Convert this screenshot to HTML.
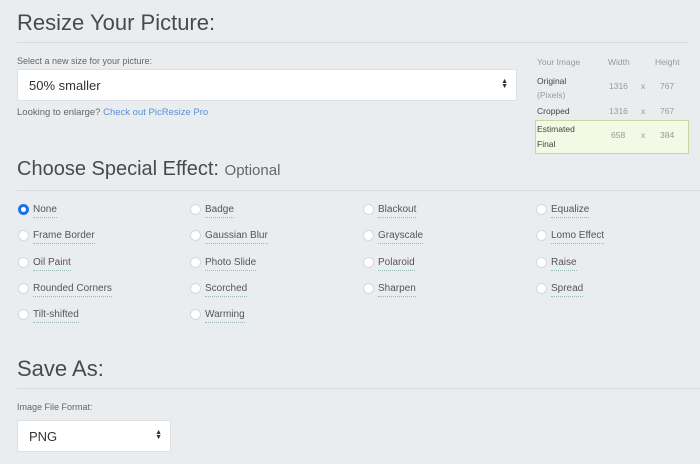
<!DOCTYPE html>
<html><head><style>
body{margin:0;width:700px;height:464px;background:#e9edf0;font-family:"Liberation Sans",sans-serif;position:relative;overflow:hidden;color:#555}
.a{position:absolute;white-space:nowrap}
h1{position:absolute;margin:0;font-weight:400;font-size:22px;color:#4a4a4a;white-space:nowrap}
.hr{position:absolute;left:17px;right:0;height:1px;background:#d6dadd}
.sel{position:absolute;background:#fff;border:1px solid #dde1e4;border-radius:2px;font-size:13px;color:#333}
.sel span{position:absolute;left:11px;top:8px}
.sel i{position:absolute;right:8px;top:9px;font-style:normal;font-size:7px;line-height:5px;color:#333}
.r{position:absolute;width:9px;height:9px;border-radius:50%;background:#fff;border:1px solid #d6d9dc}
.l{position:absolute;font-size:10px;color:#555;border-bottom:1px dotted #9bb;padding-bottom:2px}
.t{font-size:8.5px;color:#666}
</style></head><body>
<h1 style="left:17px;top:10px">Resize Your Picture:</h1>
<div class="hr" style="top:42px;right:12px"></div>
<div class="a" style="left:17px;top:56px;font-size:9px;color:#666">Select a new size for your picture:</div>
<div class="sel" style="left:17px;top:69px;width:498px;height:30px"><span>50% smaller</span><i>▲<br>▼</i></div>
<div class="a" style="left:17px;top:107px;font-size:9.5px;color:#666">Looking to enlarge? <span style="color:#5b8fd4">Check out PicResize Pro</span></div>
<div class="a t" style="left:537px;top:57px;color:#999">Your Image</div>
<div class="a t" style="left:608px;top:57px;color:#999">Width</div>
<div class="a t" style="left:655px;top:57px;color:#999">Height</div>
<div class="a t" style="left:537px;top:74px;color:#444;line-height:14px">Original<br><span style="color:#999">(Pixels)</span></div>
<div class="a t" style="left:609px;top:81px;color:#999">1316</div><div class="a t" style="left:641px;top:81px;color:#999">x</div><div class="a t" style="left:660px;top:81px;color:#999">767</div>
<div class="a t" style="left:537px;top:106px;color:#444">Cropped</div>
<div class="a t" style="left:609px;top:106px;color:#999">1316</div><div class="a t" style="left:641px;top:106px;color:#999">x</div><div class="a t" style="left:660px;top:106px;color:#999">767</div>
<div class="a" style="left:535px;top:120px;width:152px;height:32px;background:#f2f9e4;border:1px solid #c5d99a"></div>
<div class="a t" style="left:537px;top:122px;color:#444;line-height:15px">Estimated<br>Final</div>
<div class="a t" style="left:611px;top:130px;color:#999">658</div><div class="a t" style="left:641px;top:130px;color:#999">x</div><div class="a t" style="left:660px;top:130px;color:#999">384</div>
<h1 style="left:17px;top:158px;font-size:20px">Choose Special Effect: <span style="font-size:15px;color:#666">Optional</span></h1>
<div class="hr" style="top:190px"></div>
<div class="r" style="left:18px;top:204px;width:5px;height:5px;border:3px solid #1a73e8"></div>
<div class="l" style="left:33px;top:204px">None</div>
<div class="r" style="left:18px;top:230px"></div><div class="l" style="left:33px;top:230px">Frame Border</div>
<div class="r" style="left:18px;top:257px"></div><div class="l" style="left:33px;top:257px">Oil Paint</div>
<div class="r" style="left:18px;top:283px"></div><div class="l" style="left:33px;top:283px">Rounded Corners</div>
<div class="r" style="left:18px;top:309px"></div><div class="l" style="left:33px;top:309px">Tilt-shifted</div>
<div class="r" style="left:190px;top:204px"></div><div class="l" style="left:205px;top:204px">Badge</div>
<div class="r" style="left:190px;top:230px"></div><div class="l" style="left:205px;top:230px">Gaussian Blur</div>
<div class="r" style="left:190px;top:257px"></div><div class="l" style="left:205px;top:257px">Photo Slide</div>
<div class="r" style="left:190px;top:283px"></div><div class="l" style="left:205px;top:283px">Scorched</div>
<div class="r" style="left:190px;top:309px"></div><div class="l" style="left:205px;top:309px">Warming</div>
<div class="r" style="left:363px;top:204px"></div><div class="l" style="left:378px;top:204px">Blackout</div>
<div class="r" style="left:363px;top:230px"></div><div class="l" style="left:378px;top:230px">Grayscale</div>
<div class="r" style="left:363px;top:257px"></div><div class="l" style="left:378px;top:257px">Polaroid</div>
<div class="r" style="left:363px;top:283px"></div><div class="l" style="left:378px;top:283px">Sharpen</div>
<div class="r" style="left:536px;top:204px"></div><div class="l" style="left:551px;top:204px">Equalize</div>
<div class="r" style="left:536px;top:230px"></div><div class="l" style="left:551px;top:230px">Lomo Effect</div>
<div class="r" style="left:536px;top:257px"></div><div class="l" style="left:551px;top:257px">Raise</div>
<div class="r" style="left:536px;top:283px"></div><div class="l" style="left:551px;top:283px">Spread</div>
<h1 style="left:17px;top:356px">Save As:</h1>
<div class="hr" style="top:388px"></div>
<div class="a" style="left:17px;top:402px;font-size:9px;color:#666">Image File Format:</div>
<div class="sel" style="left:17px;top:420px;width:152px;height:30px"><span>PNG</span><i>▲<br>▼</i></div>
</body></html>
